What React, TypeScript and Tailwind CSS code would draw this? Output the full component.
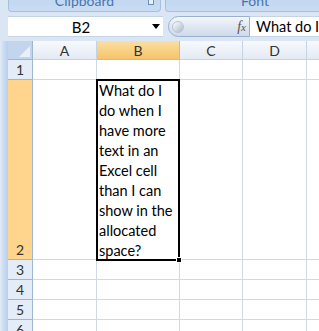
import React from "react";

const font = { fontFamily: "Lato, 'Open Sans', sans-serif" };

const lines = [
  "What do I",
  "do when I",
  "have more",
  "text in an",
  "Excel cell",
  "than I can",
  "show in the",
  "allocated",
  "space?",
];

function RowHeader({ n, h, active }: { n: string; h: string; active?: boolean }) {
  return (
    <div
      className={`flex items-end justify-center border-b border-r border-[#9eb6ce] text-[14px] leading-[19px] text-[#333] ${h} ${
        active ? "bg-[#ffd58d]" : "bg-[#e4ecf7]"
      }`}
    >
      {n}
    </div>
  );
}

function Cells({ h }: { h: string }) {
  return (
    <>
      <div className={`border-b border-r border-[#d0d7e5] bg-white ${h}`} />
      <div className={`border-b border-r border-[#d0d7e5] bg-white ${h}`} />
      <div className={`border-b border-r border-[#d0d7e5] bg-white ${h}`} />
      <div className={`border-b border-r border-[#d0d7e5] bg-white ${h}`} />
      <div className={`border-b border-[#d0d7e5] bg-white ${h}`} />
    </>
  );
}

export default function App() {
  return (
    <div className="w-[319px] h-[331px] overflow-hidden bg-[#dbe6f4] flex" style={font}>
      {/* left window frame */}
      <div className="w-[8px] shrink-0 flex flex-col">
        <div className="h-[41px] shrink-0 bg-[#dbe6f4]" />
        <div className="flex-1 bg-gradient-to-r from-[#e3ecf8] via-[#c8dbf1] to-[#b9cfea]" />
      </div>
      <div className="flex-1 flex flex-col min-w-0 min-h-0">
        {/* ribbon group labels */}
        <div className="h-[12px] shrink-0 flex gap-[4px]">
          <div className="relative w-[153px] h-[12px] overflow-hidden rounded-b-[4px] border border-t-0 border-[#a7bfde] bg-gradient-to-b from-[#c2d8f1] to-[#c9dcf2]">
            <div className="absolute left-0 right-0 -top-[8px] text-center text-[14px] leading-[18px] text-[#4a73ad]">
              Clipboard
            </div>
            <div className="absolute right-[6px] -top-[3px] w-[6px] h-[8px] border border-[#6d8fbf] bg-[#e8f0fa]" />
          </div>
          <div className="relative flex-1 h-[12px] overflow-hidden rounded-bl-[4px] border border-t-0 border-r-0 border-[#a7bfde] bg-gradient-to-b from-[#c2d8f1] to-[#c9dcf2]">
            <div className="absolute left-[75px] -top-[8px] text-[14px] leading-[18px] text-[#4a73ad]">Font</div>
          </div>
        </div>
        <div className="h-[4px] shrink-0" />
        {/* formula bar */}
        <div className="h-[21px] shrink-0 flex items-stretch">
          <div className="w-[155px] shrink-0 bg-white border-y border-[#c6d3e4] flex items-center relative">
            <div className="flex-1 text-center text-[15px] leading-[18px] text-black pl-[2px]">B2</div>
            <svg width="8" height="5" className="mr-[3px]" viewBox="0 0 8 5">
              <path d="M0 0 H8 L4 5 Z" fill="#000" />
            </svg>
          </div>
          <div className="w-[5px] shrink-0" />
          <div className="relative w-[82px] shrink-0 rounded-l-full border border-[#9bb0cc] bg-gradient-to-b from-[#f4f7fb] via-[#dfe7f2] to-[#cfdbea] flex items-center">
            <div className="ml-[3px] w-[12px] h-[12px] rounded-full bg-gradient-to-br from-[#ffffff] to-[#aab8cb] border border-[#b9c6d6]" />
            <div
              className="ml-auto mr-[3px] text-[14px] italic text-[#555]"
              style={{ fontFamily: "'Liberation Serif', serif" }}
            >
              f<span className="text-[11px]">x</span>
            </div>
          </div>
          <div className="flex-1 min-w-0 bg-white border-y border-[#c6d3e4] flex items-center pl-[6px] text-[14.5px] leading-[18px] text-black whitespace-nowrap overflow-hidden">
            <span>What do I</span>
          </div>
        </div>
        <div className="h-[4px] shrink-0" />
        {/* grid */}
        <div className="relative flex-1 min-h-0 overflow-hidden">
          <div className="grid grid-cols-[25px_64px_83px_63px_64px_20px]">
            {/* header row */}
            <div className="relative h-[19px] border-b border-r border-[#9eb6ce] bg-[#c3d5ec]">
              <svg className="absolute right-[2px] bottom-[2px]" width="11" height="11" viewBox="0 0 11 11">
                <path d="M11 0 V11 H0 Z" fill="#e9f0f9" />
              </svg>
            </div>
            <div className="h-[19px] border-b border-r border-[#c5d2e2] bg-gradient-to-b from-[#f7f9fc] to-[#e4eaf3] flex items-center justify-center text-[14px] text-[#333]">
              A
            </div>
            <div className="h-[19px] border-b border-r border-[#f2b55a] bg-gradient-to-b from-[#fadf9f] to-[#f5c46b] flex items-center justify-center text-[14px] text-[#333]">
              B
            </div>
            <div className="h-[19px] border-b border-r border-[#c5d2e2] bg-gradient-to-b from-[#f7f9fc] to-[#e4eaf3] flex items-center justify-center text-[14px] text-[#333]">
              C
            </div>
            <div className="h-[19px] border-b border-r border-[#c5d2e2] bg-gradient-to-b from-[#f7f9fc] to-[#e4eaf3] flex items-center justify-center text-[14px] text-[#333]">
              D
            </div>
            <div className="h-[19px] border-b border-[#c5d2e2] bg-gradient-to-b from-[#f7f9fc] to-[#e4eaf3]" />

            <RowHeader n="1" h="h-[20px]" />
            <Cells h="h-[20px]" />
            <RowHeader n="2" h="h-[180px]" active />
            <Cells h="h-[180px]" />
            <RowHeader n="3" h="h-[20px]" />
            <Cells h="h-[20px]" />
            <RowHeader n="4" h="h-[20px]" />
            <Cells h="h-[20px]" />
            <RowHeader n="5" h="h-[20px]" />
            <Cells h="h-[20px]" />
            <RowHeader n="6" h="h-[20px]" />
            <Cells h="h-[20px]" />
          </div>
          {/* selected cell B2 */}
          <div className="absolute left-[88px] top-[38px] w-[84px] h-[182px] border-[2px] border-black">
            <div className="pl-[1px] text-[14.5px] leading-[20px] text-black whitespace-nowrap">
              {lines.map((l) => (
                <div key={l}>{l}</div>
              ))}
            </div>
            <div className="absolute -right-[4px] -bottom-[4px] w-[6px] h-[6px] bg-black border border-white" />
          </div>
        </div>
      </div>
    </div>
  );
}
